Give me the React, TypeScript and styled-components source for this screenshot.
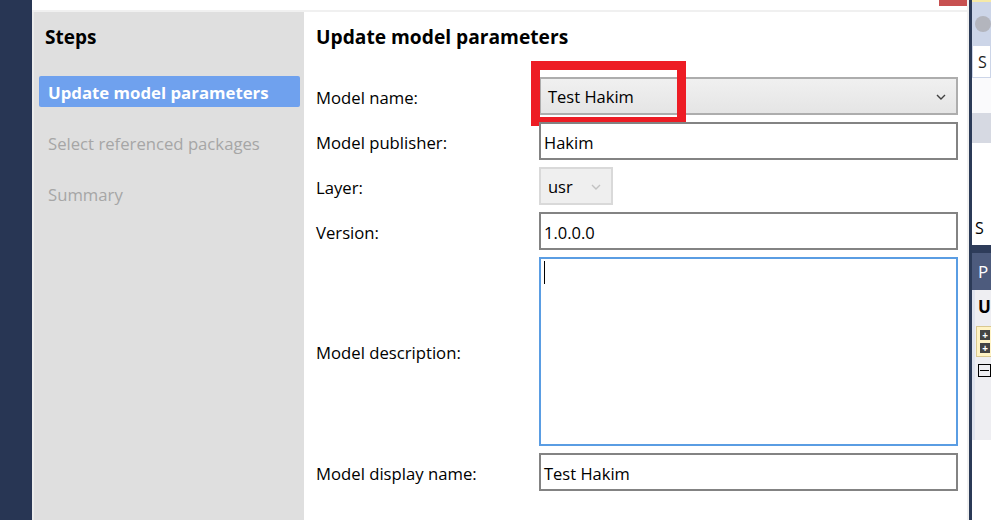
import {FC} from 'react'
import styled, {createGlobalStyle} from 'styled-components'

const GlobalStyle = createGlobalStyle`
  html, body {
    margin: 0;
    padding: 0;
    background: #fff;
    overflow: hidden;
  }

  body {
    font-family: "Open Sans", "Noto Sans", sans-serif;
    color: #000;
  }
`

const Screen = styled.div`
  display: flex;
  width: 991px;
  height: 520px;
  overflow: hidden;
`

const NavyStrip = styled.div`
  width: 32px;
  flex-shrink: 0;
  background: #283654;
`

const Dialog = styled.div`
  width: 935px;
  flex-shrink: 0;
  display: flex;
  flex-direction: column;
  background: #fff;
  border-right: 2px solid #f0f0f0;
`

const TitleBar = styled.div`
  height: 10px;
  display: flex;
  justify-content: flex-end;
  border-bottom: 2px solid #f0f0f0;
`

const CloseButton = styled.div`
  width: 28px;
  height: 6px;
  background: #c75050;
`

const Body = styled.div`
  flex: 1;
  display: flex;
  border-left: 2px solid #ebebeb;
`

const Sidebar = styled.div`
  width: 270px;
  flex-shrink: 0;
  box-sizing: border-box;
  padding: 13px 4px 0 5px;
  background: #dfdfdf;
  display: flex;
  flex-direction: column;
`

const SidebarTitle = styled.div`
  margin-left: 6px;
  font-size: 19px;
  line-height: 24px;
  font-weight: 700;
`

const StepList = styled.div`
  margin-top: 27px;
  display: flex;
  flex-direction: column;
  gap: 20px;
`

const Step = styled.div<{$active?: boolean}>`
  height: 31px;
  box-sizing: border-box;
  display: flex;
  align-items: center;
  padding: 2px 0 0 9px;
  border-radius: 2px;
  font-size: ${p => (p.$active ? '16.8px' : '16.7px')};
  font-weight: ${p => (p.$active ? 700 : 400)};
  color: ${p => (p.$active ? '#fff' : '#a6a6a6')};
  background: ${p => (p.$active ? '#6fa1ee' : 'transparent')};
`

const Content = styled.div`
  flex: 1;
  padding: 13px 9px 0 12px;
  display: flex;
  flex-direction: column;
`

const PageTitle = styled.h1`
  margin: 0;
  font-size: 19.2px;
  line-height: 24px;
  font-weight: 700;
`

const Form = styled.div`
  margin-top: 28px;
  display: grid;
  grid-template-columns: 223px 419px;
  grid-template-rows: 38px 38px 38px 38px 189px 38px;
  row-gap: 7px;
`

const Label = styled.div`
  display: flex;
  align-items: center;
  padding-top: 2px;
  font-size: 16.7px;
`

const Field = styled.div`
  position: relative;
  display: flex;
`

const TextBox = styled.div<{$focused?: boolean}>`
  flex: 1;
  box-sizing: border-box;
  display: flex;
  align-items: ${p => (p.$focused ? 'flex-start' : 'center')};
  padding: ${p => (p.$focused ? '2px 3px' : '2px 3px 0')};
  border: 2px solid ${p => (p.$focused ? '#5a9de3' : '#838383')};
  background: #fff;
  font-size: 16.5px;
`

const Combo = styled.div<{$disabled?: boolean}>`
  box-sizing: border-box;
  display: flex;
  align-items: center;
  justify-content: space-between;
  padding: 1px 10px 0 7px;
  font-size: 16.5px;
  flex: ${p => (p.$disabled ? '0 0 74px' : '1')};
  border: 2px solid ${p => (p.$disabled ? '#d9d9d9' : '#adadad')};
  background: ${p =>
    p.$disabled ? '#efefef' : 'linear-gradient(#f0f0f0, #e5e5e5)'};
`

const Caret = styled.div`
  width: 1px;
  height: 23px;
  background: #000;
`

const Highlight = styled.div`
  position: absolute;
  left: -8px;
  top: -16px;
  width: 155px;
  height: 65px;
  box-sizing: border-box;
  border: 9px solid #ed1c24;
  pointer-events: none;
`

const DarkBorder = styled.div`
  width: 3px;
  flex-shrink: 0;
  background: #2b3a57;
`

const VsPanel = styled.div`
  flex: 1;
  display: flex;
  flex-direction: column;
  overflow: hidden;
  background: #dfe3ee;
`

const Accent = styled.div`
  height: 2px;
  background: #f5e9a8;
`

const Toolbar = styled.div`
  height: 43px;
  background: #ccd5e8;
  display: flex;
  align-items: center;
  padding-left: 3px;
`

const RoundIcon = styled.div`
  width: 18px;
  height: 16px;
  border-radius: 50%;
  background: #b3b5bd;
`

const SearchBox = styled.div`
  height: 33px;
  box-sizing: border-box;
  display: flex;
  align-items: center;
  padding-left: 5px;
  background: #fff;
  border: 1px solid #ccd5e8;
  font-size: 16px;
  color: #1e1e1e;
`

const Block = styled.div<{$h: number; $bg: string}>`
  height: ${p => p.$h}px;
  flex-shrink: 0;
  box-sizing: border-box;
  background: ${p => p.$bg};
  display: flex;
  align-items: flex-end;
  padding: 0 0 6px 3px;
  font-size: 16px;
`

const PanelHeader = styled.div`
  height: 37px;
  display: flex;
  align-items: center;
  padding-left: 6px;
  background: #4d5b7d;
  color: #fff;
  font-size: 17px;
`

const TreeArea = styled.div`
  height: 150px;
  margin-left: 3px;
  padding-left: 3px;
  background: #eeeef2;
  display: flex;
  flex-direction: column;
`

const TreeTitle = styled.div`
  margin-top: 6px;
  font-size: 17px;
  font-weight: 700;
  line-height: 22px;
`

const TreeGroup = styled.div`
  margin-top: 8px;
  margin-left: -2px;
  width: 40px;
  height: 31px;
  box-sizing: border-box;
  padding: 3px 0 0 3px;
  background: #fff3c4;
  border: 1px solid #d9c890;
  display: flex;
  flex-direction: column;
  gap: 3px;
`

const PlusBox = styled.div`
  width: 10px;
  height: 10px;
  background: #444;
  color: #fff;
  font-size: 10px;
  line-height: 10px;
  text-align: center;
  font-weight: 700;
`

const MinusBox = styled.div`
  margin-top: 7px;
  width: 13px;
  height: 13px;
  box-sizing: border-box;
  border: 1px solid #000;
  display: flex;
  align-items: center;
  justify-content: center;

  &::after {
    content: '';
    width: 9px;
    height: 1px;
    background: #000;
  }
`

const Chevron: FC<{color: string}> = ({color}) => (
  <svg width="10" height="6" viewBox="0 0 10 6">
    <path d="M1 1l4 4 4-4" fill="none" stroke={color} strokeWidth="1.4" />
  </svg>
)

const steps = [
  {title: 'Update model parameters', active: true},
  {title: 'Select referenced packages', active: false},
  {title: 'Summary', active: false},
]

const App: FC = () => (
  <>
    <GlobalStyle />
    <Screen>
      <NavyStrip />
      <Dialog>
        <TitleBar>
          <CloseButton />
        </TitleBar>
        <Body>
          <Sidebar>
            <SidebarTitle>Steps</SidebarTitle>
            <StepList>
              {steps.map(step => (
                <Step key={step.title} $active={step.active}>
                  {step.title}
                </Step>
              ))}
            </StepList>
          </Sidebar>
          <Content>
            <PageTitle>Update model parameters</PageTitle>
            <Form>
              <Label>Model name:</Label>
              <Field>
                <Combo>
                  <span>Test Hakim</span>
                  <Chevron color="#404040" />
                </Combo>
                <Highlight />
              </Field>

              <Label>Model publisher:</Label>
              <Field>
                <TextBox>Hakim</TextBox>
              </Field>

              <Label>Layer:</Label>
              <Field>
                <Combo $disabled>
                  <span>usr</span>
                  <Chevron color="#c2c2c2" />
                </Combo>
              </Field>

              <Label>Version:</Label>
              <Field>
                <TextBox>1.0.0.0</TextBox>
              </Field>

              <Label>Model description:</Label>
              <Field>
                <TextBox $focused>
                  <Caret />
                </TextBox>
              </Field>

              <Label>Model display name:</Label>
              <Field>
                <TextBox>Test Hakim</TextBox>
              </Field>
            </Form>
          </Content>
        </Body>
      </Dialog>
      <DarkBorder />
      <VsPanel>
        <Accent />
        <Toolbar>
          <RoundIcon />
        </Toolbar>
        <SearchBox>S</SearchBox>
        <Block $h={35} $bg="#fafafc" />
        <Block $h={30} $bg="#d6d9e2" />
        <Block $h={102} $bg="#fff">
          S
        </Block>
        <Block $h={8} $bg="#2e3c5a" />
        <PanelHeader>P</PanelHeader>
        <TreeArea>
          <TreeTitle>U</TreeTitle>
          <TreeGroup>
            <PlusBox>+</PlusBox>
            <PlusBox>+</PlusBox>
          </TreeGroup>
          <MinusBox />
        </TreeArea>
        <Block $h={80} $bg="#fff" />
      </VsPanel>
    </Screen>
  </>
)

export default App
